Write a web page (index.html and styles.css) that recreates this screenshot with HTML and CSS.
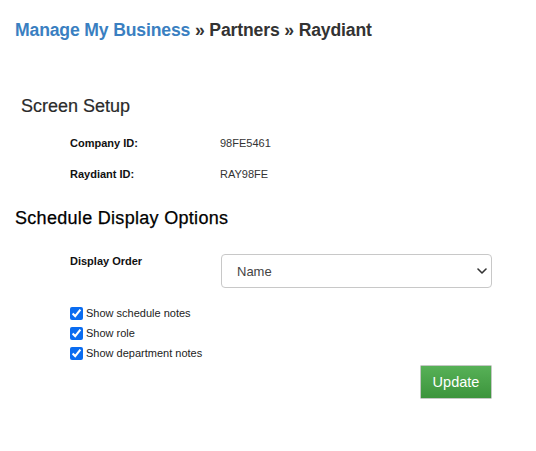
FILE: index.html
```html
<!DOCTYPE html>
<html lang="en">
<head>
<meta charset="utf-8">
<title>Raydiant</title>
<link rel="stylesheet" href="styles.css">
</head>
<body>
<div class="page">
  <h1 class="breadcrumb"><a class="crumb-link" href="#">Manage My Business</a> » Partners » Raydiant</h1>

  <h2 class="section-title">Screen Setup</h2>
  <div class="info">
    <div class="info-row"><span class="info-label">Company ID:</span><span class="info-value">98FE5461</span></div>
    <div class="info-row"><span class="info-label">Raydiant ID:</span><span class="info-value">RAY98FE</span></div>
  </div>

  <h2 class="section-title options-title">Schedule Display Options</h2>
  <form class="options">
    <div class="field-row">
      <label class="field-label" for="order">Display Order</label>
      <div class="select-wrap">
        <select id="order" class="select">
          <option>Name</option>
          <option>Start Time</option>
          <option>Role</option>
        </select>
        <svg class="chevron" width="10" height="6" viewBox="0 0 10 6" aria-hidden="true"><polyline points="1,1 5,5 9,1" fill="none" stroke="#333" stroke-width="1.6" stroke-linecap="round" stroke-linejoin="round"/></svg>
      </div>
    </div>
    <div class="checks">
      <label class="check"><input type="checkbox" checked><span>Show schedule notes</span></label>
      <label class="check"><input type="checkbox" checked><span>Show role</span></label>
      <label class="check"><input type="checkbox" checked><span>Show department notes</span></label>
    </div>
    <div class="actions">
      <button type="button" class="btn-update">Update</button>
    </div>
  </form>
</div>
</body>
</html>
```
FILE: styles.css
```css
html, body {
  margin: 0;
  padding: 0;
  background: #fff;
}
body {
  font-family: "Liberation Sans", Arial, Helvetica, sans-serif;
  color: #333;
}
.page {
  padding: 20px 0 0 15px;
}
.breadcrumb {
  margin: 0;
  font-size: 17.6px;
  line-height: 20px;
  font-weight: bold;
  color: #333;
  letter-spacing: -0.15px;
}
.crumb-link {
  color: #3a7fc1;
  text-decoration: none;
}
.section-title {
  margin: 56px 0 0 6px;
  font-size: 18px;
  line-height: 20px;
  font-weight: normal;
  color: #2a2a2a;
  -webkit-text-stroke: 0.2px #2a2a2a;
}
.info {
  margin: 12px 0 0 55px;
}
.info-row {
  display: grid;
  grid-template-columns: 150px 1fr;
  padding: 8px 0;
  line-height: 15px;
  font-size: 11px;
}
.info-label {
  font-weight: bold;
  color: #111;
}
.info-value {
  color: #333;
}
.options-title {
  margin: 18px 0 0 0;
  color: #000;
  -webkit-text-stroke: 0.25px #000;
  letter-spacing: 0.3px;
}
.options {
  margin: 26px 0 0 55px;
  width: 422px;
}
.field-row {
  display: grid;
  grid-template-columns: 151px 1fr;
  align-items: start;
}
.field-label {
  font-size: 11px;
  line-height: 15px;
  font-weight: bold;
  color: #111;
}
.select-wrap {
  position: relative;
}
.select {
  display: block;
  width: 271px;
  height: 34px;
  margin: 0;
  padding: 0 30px 0 15px;
  border: 1px solid #c8c8c8;
  border-radius: 4px;
  background: #fff;
  font-family: "Liberation Sans", Arial, Helvetica, sans-serif;
  font-size: 13px;
  color: #444;
  -webkit-appearance: none;
  appearance: none;
}
.chevron {
  position: absolute;
  right: 5px;
  top: 14px;
  pointer-events: none;
}
.checks {
  margin-top: 15px;
  display: flex;
  flex-direction: column;
}
.check {
  display: flex;
  align-items: center;
  height: 20px;
  gap: 3px;
  font-size: 11px;
  color: #222;
}
.check input {
  width: 13px;
  height: 13px;
  margin: 0;
  accent-color: #0a6cf0;
}
.actions {
  display: flex;
  justify-content: flex-end;
  margin-top: 2px;
}
.btn-update {
  width: 72px;
  height: 34px;
  padding: 0;
  border: 1px solid #c4c8c4;
  border-radius: 1px;
  background: linear-gradient(to bottom, #57b157 0%, #3c943c 100%);
  color: #fff;
  font-family: "Liberation Sans", Arial, Helvetica, sans-serif;
  font-size: 14.5px;
  cursor: pointer;
}
```
